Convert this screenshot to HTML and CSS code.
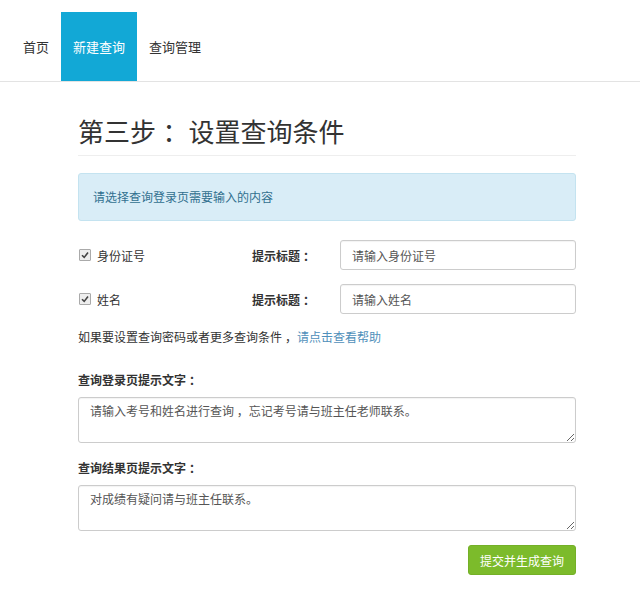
FILE: index.html
```html
<!DOCTYPE html>
<html lang="zh-CN">
<head>
    <meta charset="UTF-8">
    <meta name="viewport" content="width=device-width, initial-scale=1.0">
    <title>设置查询条件</title>
    <link rel="stylesheet" href="styles.css">
</head>
<body>
    <div class="nav">
        <a href="#" class="nav-item">首页</a>
        <a href="#" class="nav-item active">新建查询</a>
        <a href="#" class="nav-item">查询管理</a>
    </div>

    <div class="container">
        <h1>第三步<span class="punct">：</span>设置查询条件</h1>

        <div class="alert">请选择查询登录页需要输入的内容</div>

        <div class="field-row">
            <label class="check">
                <span class="box"><svg viewBox="0 0 10 10" width="10" height="10"><path d="M2 5.2 L4.2 7.4 L8 2.6" fill="none" stroke="#444" stroke-width="1.6"/></svg></span>
                身份证号
            </label>
            <span class="hint-label">提示标题<span class="punct">：</span></span>
            <input type="text" class="input" value="请输入身份证号">
        </div>

        <div class="field-row">
            <label class="check">
                <span class="box"><svg viewBox="0 0 10 10" width="10" height="10"><path d="M2 5.2 L4.2 7.4 L8 2.6" fill="none" stroke="#444" stroke-width="1.6"/></svg></span>
                姓名
            </label>
            <span class="hint-label">提示标题<span class="punct">：</span></span>
            <input type="text" class="input" value="请输入姓名">
        </div>

        <p class="help">如果要设置查询密码或者更多查询条件<span class="punct">，</span><a href="#">请点击查看帮助</a></p>

        <label class="block-label">查询登录页提示文字<span class="punct">：</span></label>
        <textarea class="textarea">请输入考号和姓名进行查询 ，忘记考号请与班主任老师联系。</textarea>

        <label class="block-label">查询结果页提示文字<span class="punct">：</span></label>
        <textarea class="textarea">对成绩有疑问请与班主任联系。</textarea>

        <div class="actions">
            <button class="btn-submit">提交并生成查询</button>
        </div>
    </div>
</body>
</html>
```

FILE: styles.css
```css
body {
    margin: 0;
    font-family: "Noto Sans CJK SC", "Noto Sans", sans-serif;
    font-size: 12px;
    color: #333;
    background: #fff;
}
.punct {
    display: inline-block;
    padding-left: 0.25em;
}
.nav {
    display: flex;
    padding: 12px 0 0 11px;
    border-bottom: 1px solid #e3e3e3;
    height: 69px;
}
.nav-item {
    display: flex;
    align-items: center;
    padding: 0 12px;
    height: 69px;
    font-size: 13px;
    color: #333;
    text-decoration: none;
}
.nav-item.active {
    background: #12a8d6;
    color: #fff;
}
.container {
    width: 498px;
    margin-left: 78px;
}
h1 {
    margin: 31px 0 0;
    padding-bottom: 6px;
    font-size: 26px;
    font-weight: normal;
    line-height: 36px;
    color: #333;
    border-bottom: 1px solid #eee;
}
.alert {
    margin-top: 17px;
    padding: 14px;
    line-height: 18px;
    background: #d9edf7;
    border: 1px solid #c4e3f0;
    border-radius: 3px;
    color: #31708f;
}
.field-row {
    display: grid;
    grid-template-columns: 174px 88px 236px;
    align-items: center;
    margin-top: 19px;
}
.field-row + .field-row {
    margin-top: 14px;
}
.check {
    display: flex;
    align-items: center;
    gap: 6px;
    padding-left: 1px;
}
.box {
    display: inline-flex;
    width: 10px;
    height: 10px;
    border: 1px solid #aaa;
    border-radius: 1px;
    background: #eee;
}
.hint-label {
    font-weight: bold;
}
.input {
    box-sizing: border-box;
    width: 236px;
    height: 30px;
    padding: 0 11px;
    font-family: inherit;
    font-size: 12px;
    color: #555;
    border: 1px solid #ccc;
    border-radius: 3px;
    box-shadow: inset 0 1px 1px rgba(0, 0, 0, 0.05);
}
.help {
    margin: 14px 0 0;
    line-height: 18px;
}
.help a {
    color: #4f8fba;
    text-decoration: none;
}
.block-label {
    display: block;
    margin-top: 25px;
    line-height: 18px;
    font-weight: bold;
}
.textarea {
    display: block;
    box-sizing: border-box;
    width: 498px;
    height: 46px;
    margin-top: 8px;
    padding: 4px 11px;
    font-family: inherit;
    font-size: 12px;
    line-height: 18px;
    color: #555;
    border: 1px solid #ccc;
    border-radius: 3px;
    box-shadow: inset 0 1px 1px rgba(0, 0, 0, 0.05);
}
.textarea + .block-label {
    margin-top: 16px;
}
.actions {
    display: flex;
    justify-content: flex-end;
    margin-top: 14px;
}
.btn-submit {
    width: 108px;
    height: 30px;
    font-family: inherit;
    font-size: 12px;
    color: #fff;
    background: #7cbb2b;
    border: 1px solid #74b027;
    border-radius: 3px;
}
```
